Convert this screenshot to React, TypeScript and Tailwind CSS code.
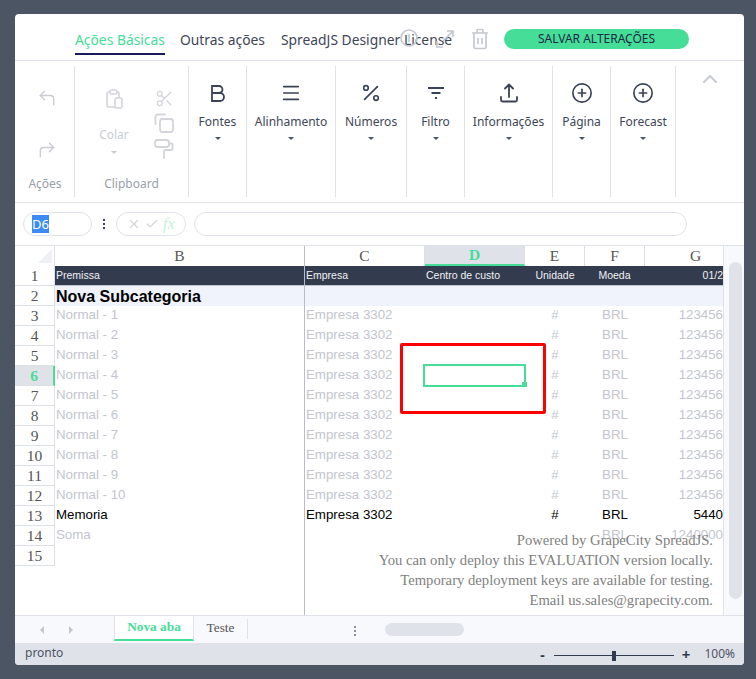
import React from "react";
import { ChevronUp, Check, X, CirclePlus, CornerUpLeft, CornerUpRight, Scissors, Menu, Percent } from "lucide-react";

const SANS = "font-['Noto_Sans',sans-serif]";
const ARIAL = "font-['Liberation_Sans',sans-serif]";
const SERIF = "font-['Liberation_Serif',serif]";

function Caret({ light }: { light?: boolean }) {
  return <span className={`block w-0 h-0 border-x-[3px] border-x-transparent border-t-[3px] ${light ? "border-t-[#c9ccd3]" : "border-t-[#4b5563]"}`} />;
}

function Group({ w, label, icon }: { w: string; label: string; icon: React.ReactNode }) {
  return (
    <div className={`${w} flex flex-col items-center border-r border-[#e0e2ea] text-[#3e4657]`}>
      <div className="h-[24px] mt-[15px] flex items-center justify-center">{icon}</div>
      <div className="mt-[8px] text-[12px] leading-[18px]">{label}</div>
      <div className="mt-[6px]"><Caret /></div>
    </div>
  );
}

const BIcon = () => (
  <svg width="24" height="24" viewBox="0 0 24 24" fill="none" stroke="#3a4255" strokeWidth="1.800">
    <path d="M6 5h7a3.500 3.500 0 0 1 0 7H6zM6 12h8a4 4 0 0 1 0 8H6z" />
  </svg>
);
const FilterIcon = () => (
  <svg width="24" height="24" viewBox="0 0 24 24" fill="none" stroke="#3a4255" strokeWidth="1.800">
    <path d="M4 7h16M7.500 12h9M11 17h2" />
  </svg>
);
const UploadIcon = () => (
  <svg width="24" height="24" viewBox="0 0 24 24" fill="none" stroke="#3a4255" strokeWidth="1.800" strokeLinecap="round" strokeLinejoin="round">
    <path d="M12 16V4M8 7.500 12 3.500l4 4M4 16v3a1.500 1.500 0 0 0 1.500 1.500h13A1.500 1.500 0 0 0 20 19v-3" />
  </svg>
);
const PasteIcon = () => (
  <svg width="24" height="24" viewBox="0 0 24 24" fill="none" stroke="#d3d5da" strokeWidth="1.600">
    <path d="M13 20H6.500A1.500 1.500 0 0 1 5 18.500V6.500A1.500 1.500 0 0 1 6.500 5H8M15 5h.5A1.500 1.500 0 0 1 17 6.500V11" />
    <rect x="8" y="3" width="7" height="4" rx="1.500" />
    <rect x="13" y="11" width="7" height="10" rx="1.500" />
  </svg>
);
const CopyIcon = () => (
  <svg width="22" height="22" viewBox="0 0 22 22" fill="none" stroke="#d3d5da" strokeWidth="1.800" strokeLinecap="round">
    <rect x="7" y="7" width="13" height="13" rx="2.500" />
    <path d="M12 2.500H4.500a2 2 0 0 0-2 2V12" />
  </svg>
);
const RollerIcon = () => (
  <svg width="22" height="22" viewBox="0 0 22 22" fill="none" stroke="#d3d5da" strokeWidth="1.800" strokeLinecap="round">
    <rect x="2" y="2" width="14" height="7" rx="2.500" />
    <path d="M16 5.500h2.500a1 1 0 0 1 1 1V11a1 1 0 0 1-1 1H12a1 1 0 0 0-1 1v7" />
  </svg>
);
const RingIcon = () => (
  <svg width="20" height="20" viewBox="0 0 20 20" fill="none" stroke="#c5c8d0" strokeWidth="1.600">
    <circle cx="10" cy="10" r="8" />
    <path d="M10 6v8" />
  </svg>
);
const ExpandIcon = () => (
  <svg width="22" height="22" viewBox="0 0 22 22" fill="none" stroke="#c5c8d0" strokeWidth="1.700">
    <path d="M9 13 19 3M13 3h6v6M3 13v6h6" />
  </svg>
);
const TrashIcon = () => (
  <svg width="20" height="22" viewBox="0 0 20 22" fill="none" stroke="#c5c8d0" strokeWidth="1.700">
    <path d="M2 5h16M4 5v14a1.500 1.500 0 0 0 1.500 1.500h9A1.500 1.500 0 0 0 16 19V5M7 5V2.500A1 1 0 0 1 8 1.500h4a1 1 0 0 1 1 1V5M8 10v6M12 10v6" />
  </svg>
);

const rows: [string, string, string, string, string, string][] = [
  ["Normal - 1", "Empresa 3302", "#", "BRL", "123456", "g"],
  ["Normal - 2", "Empresa 3302", "#", "BRL", "123456", "g"],
  ["Normal - 3", "Empresa 3302", "#", "BRL", "123456", "g"],
  ["Normal - 4", "Empresa 3302", "#", "BRL", "123456", "g"],
  ["Normal - 5", "Empresa 3302", "#", "BRL", "123456", "g"],
  ["Normal - 6", "Empresa 3302", "#", "BRL", "123456", "g"],
  ["Normal - 7", "Empresa 3302", "#", "BRL", "123456", "g"],
  ["Normal - 8", "Empresa 3302", "#", "BRL", "123456", "g"],
  ["Normal - 9", "Empresa 3302", "#", "BRL", "123456", "g"],
  ["Normal - 10", "Empresa 3302", "#", "BRL", "123456", "g"],
  ["Memoria", "Empresa 3302", "#", "BRL", "5440", "k"],
  ["Soma", "", "", "BRL", "1240000", "g"],
];

function RowHead({ n, active }: { n: number; active?: boolean }) {
  return (
    <div className={`w-[40px] h-full shrink-0 border-r border-b border-[#dcdfe4] flex items-center justify-center text-[15.500px] ${SERIF} ${active ? "bg-[#dfe2e7] text-[#45dd98] font-bold border-r-2 border-r-[#45dd98]" : "text-[#555]"}`}>
      {n}
    </div>
  );
}

function ColHead({ w, label, active }: { w: string; label: string; active?: boolean }) {
  return (
    <div className={`${w} h-full shrink-0 border-r border-[#dcdfe4] flex items-center justify-center text-[15.500px] ${SERIF} ${active ? "bg-[#dfe2e8] text-[#45dd98] font-bold border-b-2 border-b-[#45dd98]" : "text-[#555]"}`}>
      {label}
    </div>
  );
}

export default function App() {
  return (
    <div className={`w-[756px] h-[679px] bg-[#4b5563] pt-[14px] pl-[15px] overflow-hidden ${SANS}`}>
      <div className="relative w-[729px] h-[651px] bg-white rounded-[4px] overflow-hidden flex flex-col">
        {/* top tabs */}
        <div className="relative h-[46px] shrink-0 flex items-start pl-[60px] text-[13.850px] text-[#3e4657]">
          <div className="mt-[15px] h-[26px] border-b-2 border-[#1a1a5a] text-[#45dd98] leading-[22px] mr-[15px]">Ações Básicas</div>
          <div className="mt-[15px] leading-[22px] mr-[16px]">Outras ações</div>
          <div className="mt-[15px] leading-[22px]">SpreadJS Designer License</div>
          <div className="absolute left-[384px] top-[14px]"><RingIcon /></div>
          <div className="absolute left-[419px] top-[14px]"><ExpandIcon /></div>
          <div className="absolute left-[455px] top-[14px]"><TrashIcon /></div>
          <div className="absolute left-[489px] top-[15px] w-[185px] h-[20px] rounded-full bg-[#45dd98] text-[12px] leading-[20px] text-center text-[#1f2a44]">SALVAR ALTERAÇÕES</div>
        </div>

        {/* ribbon */}
        <div className="relative h-[143px] shrink-0 border-y border-[#e0e2ea] flex items-stretch py-[5px] pl-[1px]">
          <div className="w-[59px] relative border-r border-[#e0e2ea] flex flex-col items-center pl-[4px] text-[#c9ccd3]">
            <CornerUpLeft className="mt-[22px]" size={20} strokeWidth={1.700} />
            <CornerUpRight className="mt-[32px]" size={20} strokeWidth={1.700} />
            <div className="mt-[15px] -ml-[4px] text-[12px] leading-[18px] text-[#9a9ea8]">Ações</div>
          </div>
          <div className="w-[114px] border-r border-[#e0e2ea] flex flex-col text-[#c9ccd3]">
            <div className="flex flex-1">
              <div className="w-[78px] flex flex-col items-center">
                <div className="mt-[21px]"><PasteIcon /></div>
                <div className="mt-[15px] text-[12px] leading-[18px]">Colar</div>
                <div className="mt-[7px]"><Caret light /></div>
              </div>
              <div className="flex flex-col gap-[4px] mt-[23px] items-center">
                <Scissors size={19} strokeWidth={1.700} color="#d3d5da" />
                <CopyIcon />
                <RollerIcon />
              </div>
            </div>
            <div className="text-center text-[12px] leading-[18px] text-[#9a9ea8] mb-[4px]">Clipboard</div>
          </div>
          <Group w="w-[58px]" label="Fontes" icon={<BIcon />} />
          <Group w="w-[89px]" label="Alinhamento" icon={<Menu size={22} strokeWidth={1.800} color="#3a4255" />} />
          <Group w="w-[71px]" label="Números" icon={<Percent size={22} strokeWidth={1.800} color="#3a4255" />} />
          <Group w="w-[58px]" label="Filtro" icon={<FilterIcon />} />
          <Group w="w-[88px]" label="Informações" icon={<UploadIcon />} />
          <Group w="w-[58px]" label="Página" icon={<CirclePlus size={22} strokeWidth={1.800} color="#3a4255" />} />
          <Group w="w-[65px]" label="Forecast" icon={<CirclePlus size={22} strokeWidth={1.800} color="#3a4255" />} />
          <ChevronUp className="absolute left-[683px] top-[6px] text-[#c9ccd3]" size={24} strokeWidth={2} />
        </div>

        {/* formula bar */}
        <div className="relative h-[43px] shrink-0 flex items-center pl-[8px] pb-[1px] border-b border-[#e0e2ea]">
          <div className="w-[69px] h-[24px] rounded-full border border-[#e0e2ea] flex items-center pl-[8px] text-[13px] text-[#3e4657]">
            <span className="bg-[#3b8cf5] text-white leading-[18px]">D6</span>
          </div>
          <div className="ml-[11px] flex flex-col gap-[2px]">
            <span className="block w-[2px] h-[2px] bg-[#3e4657]" />
            <span className="block w-[2px] h-[2px] bg-[#3e4657]" />
            <span className="block w-[2px] h-[2px] bg-[#3e4657]" />
          </div>
          <div className="ml-[11px] w-[70px] h-[24px] rounded-full border border-[#e0e2ea] flex items-center pl-[10px] gap-[4px] text-[#d3d5da]">
            <X size={14} strokeWidth={2} />
            <Check size={14} strokeWidth={2} />
            <span className={`${SERIF} italic text-[16px] leading-none text-[#c5f3dd]`}>fx</span>
          </div>
          <div className="ml-[8px] w-[493px] h-[24px] rounded-full border border-[#e0e2ea]" />
          <div className="absolute left-[353px] bottom-[1px] w-[24px] h-[4px] [background-image:radial-gradient(#333_0.6px,transparent_0.7px)] [background-size:2px_2px]" />
        </div>

        {/* grid */}
        <div className={`relative h-[369px] shrink-0 flex ${ARIAL}`}>
          <div className="w-[709px] shrink-0 flex flex-col border-r border-[#e0e2ea]">
            {/* column headers */}
            <div className="h-[20px] shrink-0 flex">
              <div className="w-[40px] h-full shrink-0 border-r border-[#dcdfe4] flex items-center justify-end pr-[2px]">
                <div className="w-0 h-0 border-l-[14px] border-l-transparent border-b-[14px] border-b-[#eef0f6]" />
              </div>
              <ColHead w="w-[250px] !border-r-[#b8bcc8]" label="B" />
              <ColHead w="w-[120px]" label="C" />
              <ColHead w="w-[100px]" label="D" active />
              <ColHead w="w-[60px]" label="E" />
              <ColHead w="w-[60px]" label="F" />
              <ColHead w="w-[78px] !border-r-0 pl-[23px]" label="G" />
            </div>
            {/* row 1 */}
            <div className="h-[20px] shrink-0 flex">
              <RowHead n={1} />
              <div className="flex-1 flex bg-[#333b4f] text-[10.500px] text-[#f2f2f2] items-center border-b border-[#c2c5cc]">
                <div className="w-[250px] pl-[1px] pt-[1px] h-full flex items-center border-r border-[#b8bcc8]">Premissa</div>
                <div className="w-[120px] pl-[1px] pt-[1px]">Empresa</div>
                <div className="w-[100px] pl-[1px] pt-[1px]">Centro de custo</div>
                <div className="w-[60px] pt-[1px] text-center">Unidade</div>
                <div className="w-[60px] pt-[1px] pr-[1px] text-center">Moeda</div>
                <div className="w-[78px] pt-[1px] text-right overflow-hidden">01/2</div>
              </div>
            </div>
            {/* row 2 */}
            <div className="h-[20px] shrink-0 flex">
              <RowHead n={2} />
              <div className="flex-1 flex bg-[#f0f3fb] items-center">
                <div className="w-[250px] pl-[1px] pt-[1px] h-full flex items-center border-r border-[#b8bcc8] font-bold text-[16px] text-black">Nova Subcategoria</div>
              </div>
            </div>
            {rows.map((r, i) => {
              const dark = r[5] === "k";
              const c = dark ? "text-black" : "text-[#c3c5ce]";
              return (
                <div key={i} className={`h-[20px] shrink-0 flex text-[13.300px] ${c}`}>
                  <RowHead n={i + 3} active={i === 3} />
                  <div className="w-[250px] pl-[1px] border-r border-[#b8bcc8] leading-[18px]">{r[0]}</div>
                  <div className="w-[120px] pl-[1px] leading-[18px]">{r[1]}</div>
                  <div className="w-[100px]" />
                  <div className="w-[60px] text-center leading-[18px]">{r[2]}</div>
                  <div className="w-[60px] text-center leading-[18px]">{r[3]}</div>
                  <div className="w-[78px] text-right leading-[18px]">{r[4]}</div>
                </div>
              );
            })}
            <div className="h-[20px] shrink-0 flex">
              <RowHead n={15} />
              <div className="w-[250px] border-r border-[#b8bcc8]" />
            </div>
            <div className="flex-1 flex">
              <div className="w-[290px] border-r border-[#b8bcc8]" />
            </div>
          </div>
          {/* vertical scroll */}
          <div className="flex-1 bg-[#f8f9fd] pl-[5px] pt-[16px]">
            <div className="w-[13px] h-[337px] rounded-full bg-[#e0e2ea]" />
          </div>

          {/* selection */}
          <div className="absolute left-[408px] top-[118px] w-[103px] h-[23px] border-2 border-[#45dd98]" />
          <div className="absolute left-[507px] top-[136px] w-[5px] h-[5px] bg-[#45dd98]" />
          {/* red annotation */}
          <div className="absolute left-[385px] top-[97px] w-[146px] h-[71px] border-[3px] border-[#ff0000] rounded-[2px]" />
          {/* watermark */}
          <div className={`absolute right-[31px] top-[284px] text-right text-[14.670px] leading-[20px] text-[#808080] ${SERIF}`}>
            <div>Powered by GrapeCity SpreadJS.</div>
            <div>You can only deploy this EVALUATION version locally.</div>
            <div>Temporary deployment keys are available for testing.</div>
            <div>Email us.sales@grapecity.com.</div>
          </div>
        </div>

        {/* sheet tabs */}
        <div className="relative h-[28px] shrink-0 bg-[#f8f9fd] border-t border-[#e0e2ea] flex items-start">
          <div className="w-[99px] h-full flex items-center pl-[25px] gap-[25px]">
            <span className="block w-0 h-0 border-y-[4px] border-y-transparent border-r-[4px] border-r-[#c4c7cf]" />
            <span className="block w-0 h-0 border-y-[4px] border-y-transparent border-l-[4px] border-l-[#c4c7cf]" />
          </div>
          <div className={`w-[80px] h-[25px] bg-white border-x border-[#e0e2ea] border-b-[2px] border-b-[#45dd98] text-center text-[13.330px] font-bold leading-[22px] text-[#45dd98] ${SERIF}`}>Nova aba</div>
          <div className={`w-[54px] h-[20px] mt-[3px] border-r border-[#e0e2ea] text-center text-[13.330px] leading-[17px] text-[#555] ${SERIF}`}>Teste</div>
          <div className="absolute left-[339px] top-[10px] flex flex-col gap-[2px]">
            <span className="block w-[2px] h-[2px] bg-[#8a8f9c]" />
            <span className="block w-[2px] h-[2px] bg-[#8a8f9c]" />
            <span className="block w-[2px] h-[2px] bg-[#8a8f9c]" />
          </div>
          <div className="absolute left-[370px] top-[7px] w-[79px] h-[13px] rounded-full bg-[#e0e2ea]" />
        </div>

        {/* status bar */}
        <div className="h-[22px] shrink-0 bg-[#e0e2ea] flex items-center pl-[10px] text-[12px] text-[#4b5563]">
          <span className="leading-[18px] -mt-[2px]">pronto</span>
          <span className="ml-auto font-bold text-[#333b4f] text-[14px] leading-none mt-[1px]">-</span>
          <div className="relative ml-[9px] w-[120px] h-[1px] bg-[#333b4f] mt-[2px]">
            <div className="absolute left-[58px] -top-[4px] w-[4px] h-[10px] bg-[#333b4f]" />
          </div>
          <span className="ml-[8px] mr-[1px] font-bold text-[#333b4f] text-[15px] leading-none">+</span>
          <span className="ml-[13px] mr-[9px] text-[12px]">100%</span>
        </div>
      </div>
    </div>
  );
}
